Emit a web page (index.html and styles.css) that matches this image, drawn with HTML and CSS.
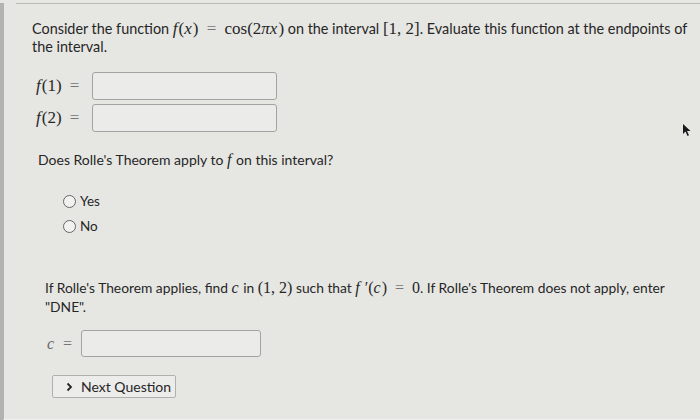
FILE: index.html
```html
<!DOCTYPE html>
<html>
<head>
<meta charset="utf-8">
<link rel="stylesheet" href="styles.css">
</head>
<body>
<div class="page">
  <div class="topline"></div>
  <div class="content">
    <p class="intro">Consider the function <span class="m"><i>f</i>(<i>x</i>) <span class="eq">=</span> cos(2<i>πx</i>)</span> on the interval <span class="m">[1, 2]</span>. Evaluate this function at the endpoints of the interval.</p>

    <div class="answers">
      <div class="row"><span class="lbl m"><i>f</i>(1) <span class="eq">=</span></span><span class="box"></span></div>
      <div class="row"><span class="lbl m"><i>f</i>(2) <span class="eq">=</span></span><span class="box"></span></div>
    </div>

    <p class="q2">Does Rolle's Theorem apply to <span class="m"><i>f</i></span> on this interval?</p>

    <div class="radios">
      <label class="radio"><span class="circle"></span>Yes</label>
      <label class="radio"><span class="circle"></span>No</label>
    </div>

    <p class="q3">If Rolle's Theorem applies, find <span class="m"><i>c</i></span> in <span class="m">(1, 2)</span> such that <span class="m"><i>f</i> ′(<i>c</i>) <span class="eq">=</span> 0</span>. If Rolle's Theorem does not apply, enter "DNE".</p>

    <div class="crow"><span class="clbl m"><i>c</i> <span class="eq">=</span></span><span class="box cbox"></span></div>

    <button class="next"><svg class="chev" width="7" height="10" viewBox="0 0 7 10"><path d="M1.5 1.5 L5 5 L1.5 8.5" fill="none" stroke="#262626" stroke-width="1.8"/></svg>Next Question</button>
  </div>
  <svg class="cursor" width="10" height="14" viewBox="0 0 10 14"><path d="M1 1 L1 11 L3.5 8.5 L5.5 13 L7 12.3 L5 8 L8.5 8 Z" fill="#1a1a1a"/></svg>
</div>
</body>
</html>
```
FILE: styles.css
```css
html, body {
  margin: 0;
  padding: 0;
}
body {
  width: 700px;
  height: 420px;
  overflow: hidden;
  background: #e6e6e3;
  font-family: Lato, "Open Sans", sans-serif;
  color: #262626;
  font-size: 14px;
}
.page {
  position: relative;
  width: 700px;
  height: 420px;
  border-left: 4px solid #b3b3b1;
  border-bottom: 4px solid #f0f0ee;
  box-sizing: border-box;
}
.topline {
  margin-left: 12px;
  height: 1px;
  background: #b9b9b7;
  margin-top: 3px;
}
.content {
  padding: 16px 0 0 28px;
}
p { margin: 0; }
.m {
  font-family: "Liberation Serif", "DejaVu Serif", serif;
  font-size: 16px;
}
.m i { font-style: italic; padding-right: 1px; }
.eq { color: #777; margin: 0 4px; }
.intro {
  width: 662px;
  font-size: 14.4px;
  line-height: 18px;
}
.intro .m { font-size: 17px; }
.answers {
  margin-top: 16px;
  margin-left: 4px;
  display: flex;
  flex-direction: column;
  gap: 4px;
}
.row {
  display: flex;
  align-items: center;
}
.lbl {
  width: 56px;
  font-size: 17px;
}
.box {
  display: block;
  width: 183px;
  height: 26px;
  border: 1px solid #a3a3a1;
  border-radius: 3px;
  background: #ebebe9;
}
.q2 {
  margin-top: 19px;
  margin-left: 6px;
}
.radios {
  margin-top: 24px;
  margin-left: 31px;
  display: flex;
  flex-direction: column;
  gap: 9px;
}
.radio {
  display: flex;
  align-items: center;
  font-size: 13.5px;
  gap: 4px;
}
.circle {
  display: inline-block;
  width: 11px;
  height: 11px;
  border: 1px solid #666;
  border-radius: 50%;
  background: #f2f2f0;
}
.q3 {
  margin-top: 44px;
  margin-left: 13px;
  width: 640px;
  line-height: 19px;
  font-size: 13.8px;
}
.crow {
  margin-top: 14px;
  margin-left: 15px;
  display: flex;
  align-items: center;
}
.clbl {
  width: 34px;
  color: #777;
}
.clbl i { color: #666; }
.cbox {
  width: 178px;
  height: 25px;
}
.next {
  margin-top: 18px;
  margin-left: 20px;
  display: flex;
  align-items: center;
  gap: 8px;
  height: 23px;
  width: 124px;
  padding: 0 0 0 13px;
  font-family: Lato, "Open Sans", sans-serif;
  font-size: 14px;
  color: #262626;
  background: #ececea;
  border: 1px solid #b0b0ae;
  border-radius: 2px;
}
.cursor {
  position: absolute;
  left: 678px;
  top: 120px;
}
```
